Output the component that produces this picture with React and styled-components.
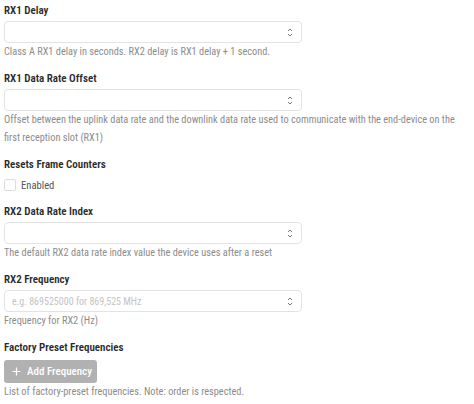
import styled, { createGlobalStyle } from "styled-components";

const GlobalStyle = createGlobalStyle`
    body {
        margin: 0;
        background: #fff;
    }
`;

const font = `"Roboto", "Lato", sans-serif`;

const Form = styled.div`
    display: flex;
    flex-direction: column;
    padding: 1px 4px 0;
    width: 466px;
    font-family: ${font};
    font-stretch: 82%;
`;
const Field = styled.div`
    display: flex;
    flex-direction: column;
    margin-bottom: 8px;
`;
const Label = styled.div`
    font-family: ${font};
    font-size: 11px;
    font-stretch: 85%;
    font-weight: 600;
    line-height: 20px;
    color: #2a2a2a;
    margin-bottom: ${props => props.tight ? "2px" : "0"};
`;
const InputWrap = styled.div`
    position: relative;
    width: 298px;
    height: 22px;
    box-sizing: border-box;
    border: 1px solid #e3e3e3;
    border-radius: 4px;
    display: flex;
    align-items: center;
    padding: 0 7px;
`;
const Input = styled.input`
    flex: 1;
    border: none;
    outline: none;
    padding: 0;
    background: transparent;
    font-family: ${font};
    font-stretch: 82%;
    font-size: 10px;
    color: #333;
    &::placeholder {
        color: #c4c4c4;
    }
`;
const Spin = styled.svg`
    position: absolute;
    right: 8px;
    top: 5px;
`;
const Help = styled.div`
    max-width: 456px;
    font-family: ${font};
    font-stretch: 82%;
    font-size: 10.3px;
    line-height: 18px;
    color: #8c8c8c;
`;
const CheckRow = styled.label`
    display: flex;
    align-items: center;
    height: 20px;
    gap: 5px;
    font-family: ${font};
    font-stretch: 82%;
    font-size: 10.6px;
    color: #555;
    margin-bottom: -1px;
`;
const Box = styled.span`
    width: 12px;
    height: 12px;
    border: 1px solid #dcdcdc;
    border-radius: 2px;
    box-sizing: border-box;
`;
const Button = styled.button`
    align-self: flex-start;
    height: 23px;
    width: 93px;
    border: none;
    border-radius: 3px;
    background: #b1b1b1;
    color: #fff;
    font-family: ${font};
    font-stretch: 85%;
    font-size: 11px;
    font-weight: 500;
    display: flex;
    align-items: center;
    justify-content: center;
    gap: 6px;
    padding: 0 0 0 3px;
`;

const Spinner = () => (
    <Spin width="6" height="11" viewBox="0 0 6 11">
        <path d="M1 4 L3 2 L5 4" fill="none" stroke="#777" strokeWidth="1" />
        <path d="M1 7 L3 9 L5 7" fill="none" stroke="#777" strokeWidth="1" />
    </Spin>
);

const NumberField = ({ label, help, placeholder }) => (
    <Field>
        <Label>{label}</Label>
        <InputWrap>
            <Input placeholder={placeholder} />
            <Spinner />
        </InputWrap>
        <Help>{help}</Help>
    </Field>
);

const App = () => {
    return (
        <>
            <GlobalStyle />
            <Form>
                <NumberField
                    label="RX1 Delay"
                    help="Class A RX1 delay in seconds. RX2 delay is RX1 delay + 1 second."
                />
                <NumberField
                    label="RX1 Data Rate Offset"
                    help="Offset between the uplink data rate and the downlink data rate used to communicate with the end-device on the first reception slot (RX1)"
                />
                <Field>
                    <Label>Resets Frame Counters</Label>
                    <CheckRow>
                        <Box />
                        Enabled
                    </CheckRow>
                </Field>
                <NumberField
                    label="RX2 Data Rate Index"
                    help="The default RX2 data rate index value the device uses after a reset"
                />
                <NumberField
                    label="RX2 Frequency"
                    placeholder="e.g. 869525000 for 869,525 MHz"
                    help="Frequency for RX2 (Hz)"
                />
                <Field>
                    <Label tight>Factory Preset Frequencies</Label>
                    <Button>
                        <svg width="9" height="9" viewBox="0 0 9 9">
                            <path d="M4.5 0.5 V8.5 M0.5 4.5 H8.5" stroke="#fff" strokeWidth="1.2" />
                        </svg>
                        Add Frequency
                    </Button>
                    <Help>List of factory-preset frequencies. Note: order is respected.</Help>
                </Field>
            </Form>
        </>
    );
};

export default App;
